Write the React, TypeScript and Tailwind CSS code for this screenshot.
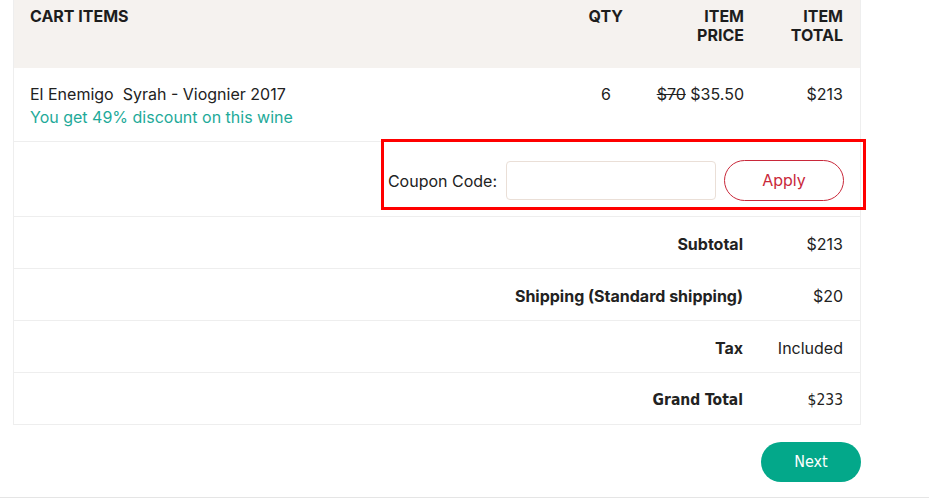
import React from 'react'

const summary = [
  { label: 'Subtotal', value: '$213' },
  { label: 'Shipping (Standard shipping)', value: '$20' },
  { label: 'Tax', value: 'Included' },
]

export default function App() {
  return (
    <div className="min-h-[499px] w-[929px] bg-white text-[#222] font-['Inter',sans-serif] relative">
      <div className="ml-[13px] w-[848px] border border-t-0 border-[#eeeeee]">
        {/* Header */}
        <div className="grid grid-cols-[1fr_90px_121px_99px] h-[68px] bg-[#f5f2ef] pl-[16px] pr-[17px] pt-[7px] text-[16px] leading-[19px] font-bold uppercase text-[#1d1d1d]">
          <div>Cart items</div>
          <div className="text-right">Qty</div>
          <div className="text-right">Item<br />Price</div>
          <div className="text-right">Item<br />Total</div>
        </div>

        {/* Item row */}
        <div className="grid grid-cols-[1fr_90px_121px_99px] h-[74px] pl-[16px] pr-[17px] pt-[15px] text-[16px] leading-[23px] border-b border-[#eeeeee]">
          <div>
            <div className="whitespace-pre">El Enemigo  Syrah - Viognier 2017</div>
            <div className="text-[#1eaa99]">You get 49% discount on this wine</div>
          </div>
          <div className="text-right pr-[12px]">6</div>
          <div className="text-right">
            <span className="line-through">$70</span> $35.50
          </div>
          <div className="text-right">$213</div>
        </div>

        {/* Coupon row */}
        <div className="relative flex items-center justify-end gap-2 h-[75px] pr-[16px] border-b border-[#eeeeee] text-[16px]">
          <label className="mr-[1px] pt-[3px]">Coupon Code:</label>
          <input className="w-[210px] h-[39px] rounded border border-[#eadfd7] outline-none px-2 mt-[2px]" />
          <button className="w-[120px] h-[41px] rounded-full border border-[#c9283a] text-[#c9283a] text-[16px] mt-[2px]">
            Apply
          </button>
          <div className="absolute left-[367px] top-[-3px] w-[485px] h-[71px] border-[3px] border-[#ff0000] pointer-events-none" />
        </div>

        {summary.map((row) => (
          <div
            key={row.label}
            className="flex items-center justify-end h-[52px] pr-[17px] pt-[3px] border-b border-[#eeeeee] text-[16px]"
          >
            <div className="font-bold text-right">{row.label}</div>
            <div className="w-[100px] text-right">{row.value}</div>
          </div>
        ))}

        <div className="flex items-center justify-end h-[51px] pr-[17px] pt-[5px] text-[15.5px] font-['Liberation_Sans_Narrow','DejaVu_Sans_Condensed',sans-serif]">
          <div className="font-bold text-right">Grand Total</div>
          <div className="w-[100px] text-right">$233</div>
        </div>
      </div>

      <div className="w-[861px] flex justify-end mt-[17px]">
        <button className="w-[100px] h-[40px] rounded-full bg-[#03a88a] text-white text-[16px] font-['Liberation_Sans_Narrow','DejaVu_Sans_Condensed',sans-serif]">
          Next
        </button>
      </div>

      <div className="absolute left-0 right-0 top-[497px] border-t border-[#e5e5e5]" />
    </div>
  )
}
